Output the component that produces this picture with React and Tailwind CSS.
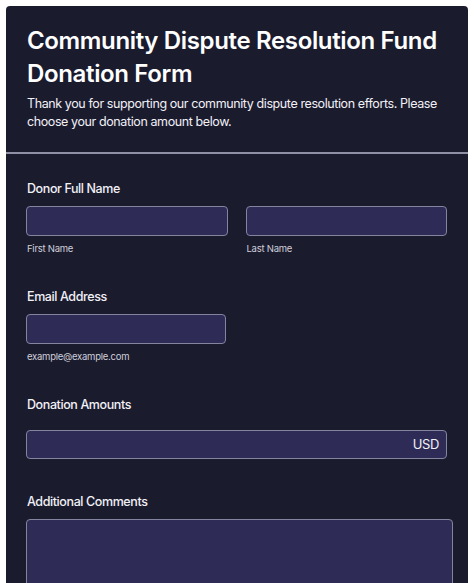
import React from 'react';

// --- Field pieces ---
const Label = ({ children, className = '' }) => (
    <div className={`text-[12.5px] leading-[18px] font-medium tracking-[-0.4px] text-[#f1f1f6] ${className}`}>{children}</div>
);

const SubLabel = ({ children }) => (
    <div className="mt-[6px] pl-[1px] text-[9.5px] leading-[14px] tracking-[-0.25px] text-[#cfcfdb]">{children}</div>
);

const inputStyle = "block h-[30px] w-full rounded-[4px] border border-[#85849f] bg-[#2e2c56] px-2 text-[13px] text-white outline-none";

export default function App() {
    return (
        <div className="min-h-screen bg-white p-[6px] font-['Inter',sans-serif]">
            <div className="rounded-[4px] bg-[#1b1b2e] overflow-hidden">
                {/* --- Header --- */}
                <div className="px-[21px] pt-[18px] pb-[21px]">
                    <h1 className="text-[24px] leading-[33px] font-semibold text-white tracking-[-0.35px]">
                        Community Dispute Resolution Fund Donation Form
                    </h1>
                    <p className="mt-[5px] text-[12.5px] leading-[18px] tracking-[-0.4px] text-[#f1f1f6]">
                        Thank you for supporting our community dispute resolution efforts. Please choose your donation amount below.
                    </p>
                </div>
                <div className="h-[2px] bg-[#8f8fa6]" />

                {/* --- Form body --- */}
                <div className="pl-[20px] pr-[21px] pt-[26px] pb-8">
                    <Label className="pl-[1px]">Donor Full Name</Label>
                    <div className="mt-2 grid grid-cols-2 gap-[18px]">
                        <div>
                            <input className={inputStyle} />
                            <SubLabel>First Name</SubLabel>
                        </div>
                        <div>
                            <input className={inputStyle} />
                            <SubLabel>Last Name</SubLabel>
                        </div>
                    </div>

                    <Label className="mt-[32px] pl-[1px]">Email Address</Label>
                    <div className="mt-2 w-[200px]">
                        <input className={inputStyle} />
                        <SubLabel>example@example.com</SubLabel>
                    </div>

                    <Label className="mt-[32px] pl-[1px]">Donation Amounts</Label>
                    <div className="mt-[16px] flex h-[29px] items-center justify-end rounded-[4px] border border-[#85849f] bg-[#2e2c56] pr-[7px]">
                        <span className="text-[13px] tracking-[-0.4px] text-[#f1f1f6]">USD</span>
                    </div>

                    <Label className="mt-[34px] pl-[1px]">Additional Comments</Label>
                    <textarea className="mt-2 block h-[120px] w-[427px] resize-none rounded-[4px] border border-[#85849f] bg-[#2e2c56] outline-none" />
                </div>
            </div>
        </div>
    );
}
